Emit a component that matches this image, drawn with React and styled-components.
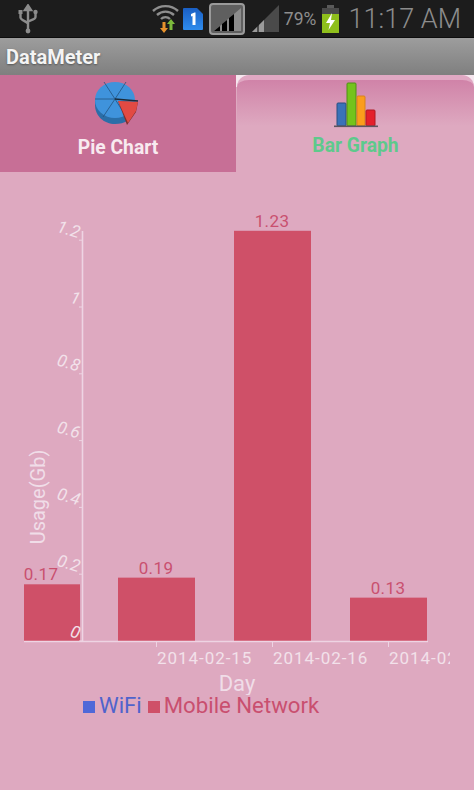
import React from 'react';
import styled, { createGlobalStyle } from 'styled-components';

const bars = [
  { x: 24, w: 56, value: 0.17, labelX: 41 },
  { x: 118, w: 77, value: 0.19, labelX: 156 },
  { x: 234, w: 77, value: 1.23, labelX: 272 },
  { x: 350, w: 77, value: 0.13, labelX: 388 },
];
const yTicks = ['0', '0.2', '0.4', '0.6', '0.8', '1', '1.2'];
const xTicks = [
  { x: 156, label: '2014-02-15' },
  { x: 272, label: '2014-02-16' },
  { x: 388, label: '2014-02-17' },
];
const BASE_Y = 641;
const UNIT = 333.5;

const UsbIcon = () => (
  <svg width="20" height="30" viewBox="0 0 20 30" fill="none" stroke="#8c8c8c" strokeWidth="2.4">
    <path d="M10 3V27" />
    <path d="M7 6L10 1.5L13 6Z" fill="#8c8c8c" />
    <path d="M2.5 9V13.5C2.5 16 10 18 10 20" />
    <path d="M17.5 9V13C17.5 16 10 16.5 10 18" />
    <rect x="0.5" y="6" width="4" height="4" fill="#8c8c8c" stroke="none" />
    <circle cx="17.5" cy="8" r="2.2" fill="#8c8c8c" stroke="none" />
    <circle cx="10" cy="27" r="2.4" fill="#8c8c8c" stroke="none" />
  </svg>
);

const WifiIcon = () => (
  <svg width="27" height="30" viewBox="0 0 27 30" fill="none">
    <path d="M1 7C8 0.5 19 0.5 26 7" stroke="#8e8e8e" strokeWidth="2.4" />
    <path d="M5 11C10 6.5 17 6.5 22 11" stroke="#8e8e8e" strokeWidth="2.4" />
    <path d="M9 15C11.5 12.5 15.5 12.5 18 15" stroke="#8e8e8e" strokeWidth="2.4" />
    <path d="M10.5 18H13.5V24H16L12 29L8 24H10.5Z" fill="#e8922c" />
    <path d="M17.5 26V20H15L19 15L23 20H20.5V26Z" fill="#7dbb3c" />
  </svg>
);

const SimIcon = () => (
  <svg width="22" height="24" viewBox="0 0 22 24">
    <defs>
      <linearGradient id="sim" x1="0" y1="0" x2="0" y2="1">
        <stop offset="0" stopColor="#1a5fc4" />
        <stop offset="1" stopColor="#2f8cec" />
      </linearGradient>
    </defs>
    <path d="M1 2Q1 1 2 1H15L21 7V22Q21 23 20 23H2Q1 23 1 22Z" fill="url(#sim)" />
    <path d="M9 7L12.5 5.5H13.5V18H10.5V9L9 9.6Z" fill="#fff" />
  </svg>
);

const BoxedSignalIcon = () => (
  <svg width="36" height="32" viewBox="0 0 36 32">
    <rect x="1" y="1" width="34" height="30" rx="3" fill="#5f5f5f" stroke="#9a9a9a" strokeWidth="2" />
    <path d="M5 28L32 5V28Z" fill="#8c8c8c" />
    <path d="M5 28L11 23V28Z" fill="#000" />
    <path d="M13 21L18 17V28H13Z" fill="#000" />
    <path d="M20 15L25 11V28H20Z" fill="#000" />
  </svg>
);

const SignalIcon = () => (
  <svg width="29" height="29" viewBox="0 0 29 29">
    <path d="M1 28L28 1V28Z" fill="#4a4a4a" />
    <path d="M1 28L6 23V28Z" fill="#9a9a9a" />
    <path d="M8 21L13 16V28H8Z" fill="#9a9a9a" />
  </svg>
);

const BatteryIcon = () => (
  <svg width="19" height="28" viewBox="0 0 19 28">
    <rect x="6" y="0" width="7" height="3" fill="#5a5a5a" />
    <rect x="1" y="3" width="17" height="8" fill="#4a4a4a" />
    <rect x="1" y="9" width="17" height="19" fill="#8fbf1c" />
    <path d="M11 8L5 18H9L7.5 25L14 15H10Z" fill="#fff" />
  </svg>
);

const PieIcon = () => (
  <svg width="56" height="50" viewBox="92 78 56 50">
    <path d="M97 101V106C97 117 106 125 117 125C122 125 126 124 129 122L118 100Z" fill="#2a6ea8" />
    <ellipse cx="117" cy="101" rx="20" ry="18" fill="#3f93dc" />
    <path d="M97 100H117L128 83M117 100L106 83M117 100L129 119M117 100L105 118" stroke="#23537f" strokeWidth="0.8" fill="none" />
    <path d="M120 102L140 103L138 113L129 126Z" fill="#7c2f2f" />
    <path d="M120 102L140 103L138 112L130 124Z" fill="#e24a43" />
    <path d="M117 100L140 102" stroke="#1b2b3a" strokeWidth="1.5" />
  </svg>
);

const BarsIcon = () => (
  <svg width="46" height="46" viewBox="332 82 46 46">
    <rect x="336" y="103" width="9" height="23" rx="1" fill="#3a72b8" stroke="#2a4f80" />
    <rect x="346" y="83" width="9" height="43" rx="1" fill="#74c31c" stroke="#4f8f14" />
    <rect x="356" y="96" width="8" height="30" rx="1" fill="#fb9d1c" stroke="#d9811a" />
    <rect x="365" y="110" width="9" height="16" rx="1" fill="#e4202c" stroke="#b01822" />
    <rect x="333" y="125.5" width="44" height="1.6" fill="#5c5560" />
  </svg>
);

export default function App() {
  return (
    <Screen>
      <GlobalStyle />
      <StatusBar>
        <UsbSlot><UsbIcon /></UsbSlot>
        <StatusIcons>
          <WifiIcon />
          <SimIcon />
          <IconSlot $left={2}><BoxedSignalIcon /></IconSlot>
          <IconSlot $left={3}><SignalIcon /></IconSlot>
          <Percent>79%</Percent>
          <BatteryIcon />
          <Clock>11:17 AM</Clock>
        </StatusIcons>
      </StatusBar>
      <ActionBar>DataMeter</ActionBar>
      <Tabs>
        <ActiveTab>
          <PieIcon />
          <TabLabel $active>Pie Chart</TabLabel>
        </ActiveTab>
        <TabShell>
          <IdleTab>
            <BarsIcon />
            <TabLabel>Bar Graph</TabLabel>
          </IdleTab>
        </TabShell>
      </Tabs>
      <ChartPanel>
        <svg width="474" height="523" viewBox="0 172 474 523">
          <defs>
            <clipPath id="plot">
              <rect x="0" y="172" width="450" height="523" />
            </clipPath>
          </defs>
          {bars.map((b) => {
            const h = b.value * UNIT;
            return (
              <g key={b.x}>
                <rect x={b.x} y={BASE_Y - h} width={b.w} height={h} fill="#cf5068" />
                <ValueLabel x={b.labelX} y={BASE_Y - h - 4} textAnchor="middle">{b.value}</ValueLabel>
              </g>
            );
          })}
          <path d="M82.5 231V642M24 641.5H428" stroke="#eed4e3" strokeWidth="1.6" fill="none" />
          {yTicks.map((t, i) => {
            const y = BASE_Y - i * 66.8;
            return (
              <g key={t}>
                <path d={`M79 ${y}H82`} stroke="#eed4e3" />
                <YTick transform={`translate(78 ${y - 2}) rotate(17)`} textAnchor="end">{t}</YTick>
              </g>
            );
          })}
          <g clipPath="url(#plot)">
            {xTicks.map((t) => (
              <g key={t.x}>
                <path d={`M${t.x + 0.5} 642V647`} stroke="#eed4e3" />
                <XTick x={t.x + 1} y={664}>{t.label}</XTick>
              </g>
            ))}
          </g>
          <AxisTitle $size={22} x="237" y="691" textAnchor="middle">Day</AxisTitle>
          <AxisTitle $size={20} transform="translate(45 497) rotate(-90)" textAnchor="middle">Usage(Gb)</AxisTitle>
        </svg>
        <Legend>
          <Swatch $color="#4f68d8" />
          <LegendName $color="#4f63cc">WiFi</LegendName>
          <Swatch $color="#cf5068" />
          <LegendName $color="#c94f6f">Mobile Network</LegendName>
        </Legend>
      </ChartPanel>
    </Screen>
  );
}

const GlobalStyle = createGlobalStyle`
  html, body {
    margin: 0;
    padding: 0;
    background: #dea9c0;
  }
  body {
    font-family: Roboto, "Liberation Sans", sans-serif;
  }
`;

const Screen = styled.div`
  width: 474px;
  height: 790px;
  overflow: hidden;
  display: flex;
  flex-direction: column;
  background: #dea9c0;
`;

const StatusBar = styled.div`
  height: 37px;
  flex: none;
  display: flex;
  align-items: center;
  justify-content: space-between;
  background: #1c1c1c;
  border-bottom: 1px solid #0c0c0c;
`;

const UsbSlot = styled.div`
  display: flex;
  padding-left: 18px;
`;

const StatusIcons = styled.div`
  display: flex;
  align-items: center;
  gap: 3px;
  padding-right: 13px;
`;

const IconSlot = styled.div`
  display: flex;
  padding-left: ${(p) => p.$left}px;
`;

const Percent = styled.span`
  width: 35px;
  font-size: 17.5px;
  color: #8e8e8e;
  text-align: center;
`;

const Clock = styled.span`
  margin-left: 6px;
  font-size: 27px;
  font-weight: 300;
  color: #8c8c8c;
  white-space: nowrap;
`;

const ActionBar = styled.div`
  height: 37px;
  flex: none;
  display: flex;
  align-items: center;
  padding-left: 6px;
  background: linear-gradient(#9d9d9d, #7f7f7f);
  color: #f4f4f4;
  font-size: 20px;
  font-weight: 700;
  text-shadow: 0 1px 2px #555;
`;

const Tabs = styled.div`
  height: 97px;
  flex: none;
  display: grid;
  grid-template-columns: 236px 238px;
  background: #dea9c0;
`;

const ActiveTab = styled.div`
  display: flex;
  flex-direction: column;
  align-items: center;
  padding-top: 2px;
  background: #c76f96;
`;

const TabShell = styled.div`
  padding-left: 1px;
  background: linear-gradient(#f5e6ee 12px, #dea9c0 12px);
`;

const IdleTab = styled.div`
  display: flex;
  flex-direction: column;
  align-items: center;
  box-sizing: border-box;
  height: 97px;
  padding-top: 2px;
  border-top: 5px solid #e0a8c3;
  border-radius: 12px 12px 0 0;
  background: linear-gradient(#d083a8, #dea9c0 50%);
`;

const TabLabel = styled.div`
  margin-top: ${(p) => (p.$active ? '9px' : '6px')};
  font-size: 19.3px;
  font-weight: 700;
  color: ${(p) => (p.$active ? '#f8eaf0' : '#5ec98c')};
`;

const ChartPanel = styled.div`
  flex: 1;
  display: flex;
  flex-direction: column;
`;

const ValueLabel = styled.text`
  font-family: Roboto, sans-serif;
  font-size: 17px;
  letter-spacing: 0.4px;
  fill: #c9506f;
`;

const YTick = styled.text`
  font-family: Roboto, sans-serif;
  font-size: 17px;
  font-style: italic;
  fill: #f2e1ea;
`;

const XTick = styled.text`
  font-family: Roboto, sans-serif;
  font-size: 17px;
  letter-spacing: 0.95px;
  fill: #f2e1ea;
`;

const AxisTitle = styled.text`
  font-family: Roboto, sans-serif;
  font-size: ${(p) => p.$size}px;
  fill: #f0dde8;
`;

const Legend = styled.div`
  display: flex;
  align-items: center;
  height: 24px;
  margin-top: -2px;
  padding-left: 83px;
`;

const Swatch = styled.span`
  width: 12px;
  height: 12px;
  margin-top: 3px;
  background: ${(p) => p.$color};
`;

const LegendName = styled.span`
  margin: 0 6px 0 4px;
  font-size: 22.2px;
  color: ${(p) => p.$color};
  white-space: nowrap;
`;
